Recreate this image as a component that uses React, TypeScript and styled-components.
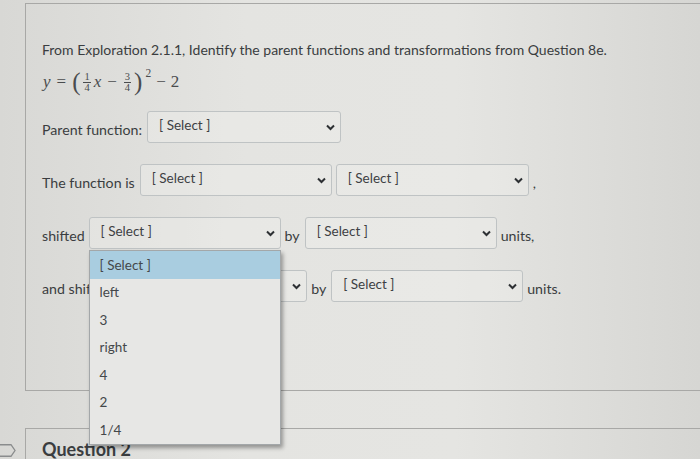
import React from 'react';
import styled, { createGlobalStyle } from 'styled-components';

const GlobalStyle = createGlobalStyle`
    html, body {
        margin: 0;
        padding: 0;
        height: 100%;
        overflow: hidden;
    }
    body {
        background: linear-gradient(90deg, #d8d8d5 0%, #e4e4e1 35%, #e5e5e2 65%, #d6d6d3 100%);
        font-family: Lato, "Open Sans", sans-serif;
        color: #3a3d40;
    }
`;

const Page = styled.div`
    display: grid;
    grid-template-columns: 25px 1fr;
    padding-top: 3px;
`;

const Card = styled.div`
    grid-column: 2;
    border-top: 1px solid #a8a8a6;
    border-left: 1px solid #a8a8a6;
    border-bottom: 1px solid #a8a8a6;
    padding: 37px 0 88px 16px;
    height: 388px;
    box-sizing: border-box;
`;

const Prompt = styled.div`
    font-size: 14px;
    line-height: 18px;
`;

const MathLine = styled.div`
    display: flex;
    align-items: center;
    height: 34px;
    margin-top: 6px;
    font-family: "Liberation Serif", "DejaVu Serif", serif;
    font-size: 17px;
    color: #4a4c4e;
`;

const Ital = styled.span`
    font-style: italic;
    margin: 0 1px;
`;

const Op = styled.span`
    margin: 0 5px;
`;

const Paren = styled.span`
    font-size: 25px;
    line-height: 1;
    transform: translateY(-1px);
    margin: 0 1px;
`;

const Frac = styled.span`
    display: inline-flex;
    flex-direction: column;
    align-items: center;
    font-size: 10.5px;
    line-height: 10px;
    margin: 0 2px;

    span:first-child {
        border-bottom: 1px solid #4a4c4e;
        padding: 0 1px;
    }
`;

const Sup = styled.span`
    font-size: 11.5px;
    align-self: flex-start;
    margin-top: 2px;
    margin-left: 2px;
`;

const Rows = styled.div`
    display: flex;
    flex-direction: column;
    gap: 21px;
    margin-top: 12px;
`;

const Row = styled.div`
    display: flex;
    align-items: center;
    height: 32px;
    font-size: 14.2px;
`;

const Label = styled.span<{ $gap?: number }>`
    margin-right: ${p => p.$gap ?? 5}px;
    transform: translateY(2px);
`;

const SelectWrap = styled.div<{ $width: number; $gap?: number }>`
    position: relative;
    width: ${p => p.$width}px;
    height: 32px;
    margin-right: ${p => p.$gap ?? 4}px;
    flex-shrink: 0;
`;

const SelectBox = styled.div`
    display: flex;
    align-items: center;
    justify-content: space-between;
    height: 100%;
    box-sizing: border-box;
    padding: 0 5px 0 11px;
    border: 1px solid #bfc3c4;
    border-radius: 3px;
    background: rgba(240, 240, 238, 0.35);
    font-size: 13.5px;
    color: #3d4043;
`;

const SelectText = styled.span`
    transform: translateY(-2px);
`;

const DropList = styled.ul`
    position: absolute;
    top: 100%;
    left: 0;
    right: 0;
    margin: 1px 0 0;
    padding: 0;
    list-style: none;
    border: 1px solid #a3a7a9;
    background: #e7e7e5;
    box-shadow: 2px 3px 4px rgba(0, 0, 0, 0.35);
    z-index: 5;
`;

const DropItem = styled.li<{ $active?: boolean }>`
    height: 27.5px;
    display: flex;
    align-items: center;
    padding-left: 10px;
    font-size: 13.5px;
    color: #44474a;
    background: ${p => (p.$active ? '#a9cde0' : 'transparent')};
`;

const Second = styled.div`
    display: contents;
`;

const FlagCell = styled.div`
    grid-column: 1;
    margin-top: 37px;
    padding-top: 13px;
`;

const QuestionBox = styled.div`
    grid-column: 2;
    margin-top: 37px;
    border-top: 1px solid #a8a8a6;
    border-left: 1px solid #a8a8a6;
    padding: 9px 0 0 16px;
    height: 40px;
`;

const QuestionTitle = styled.div`
    font-size: 18px;
    font-weight: 700;
    color: #3a3d40;
`;

const Chevron = () => (
    <svg width="9" height="7" viewBox="0 0 9 7">
        <polyline points="1,1.5 4.5,5 8,1.5" fill="none" stroke="#2d3033" strokeWidth="2" />
    </svg>
);

const Flag = () => (
    <svg width="16" height="13" viewBox="0 0 16 13">
        <path d="M-3 0.75 H11 L15 6.5 L11 12.25 H-3" fill="none" stroke="#8a8c8d" strokeWidth="1.3" />
    </svg>
);

const Select = ({ width, gap, open }: { width: number; gap?: number; open?: boolean }) => {
    const options = ['[ Select ]', 'left', '3', 'right', '4', '2', '1/4'];
    return (
        <SelectWrap $width={width} $gap={gap}>
            <SelectBox>
                <SelectText>[ Select ]</SelectText>
                <Chevron />
            </SelectBox>
            {open && (
                <DropList>
                    {options.map((o, i) => (
                        <DropItem key={o} $active={i === 0}>{o}</DropItem>
                    ))}
                </DropList>
            )}
        </SelectWrap>
    );
};

export default function App() {
    return (
        <>
            <GlobalStyle />
            <Page>
                <Card>
                    <Prompt>
                        From Exploration 2.1.1, Identify the parent functions and transformations from Question 8e.
                    </Prompt>
                    <MathLine>
                        <Ital>y</Ital>
                        <Op>=</Op>
                        <Paren>(</Paren>
                        <Frac><span>1</span><span>4</span></Frac>
                        <Ital>x</Ital>
                        <Op>−</Op>
                        <Frac><span>3</span><span>4</span></Frac>
                        <Paren>)</Paren>
                        <Sup>2</Sup>
                        <Op>−</Op>
                        <span>2</span>
                    </MathLine>
                    <Rows>
                        <Row>
                            <Label>Parent function:</Label>
                            <Select width={194} />
                        </Row>
                        <Row>
                            <Label>The function is</Label>
                            <Select width={192} />
                            <Select width={193} />
                            <Label>,</Label>
                        </Row>
                        <Row>
                            <Label $gap={4}>shifted</Label>
                            <Select width={192} open />
                            <Label>by</Label>
                            <Select width={192} />
                            <Label>units,</Label>
                        </Row>
                        <Row>
                            <Label $gap={4}>and shifted</Label>
                            <Select width={192} />
                            <Label>by</Label>
                            <Select width={192} />
                            <Label>units.</Label>
                        </Row>
                    </Rows>
                </Card>
                <Second>
                    <FlagCell>
                        <Flag />
                    </FlagCell>
                    <QuestionBox>
                        <QuestionTitle>Question 2</QuestionTitle>
                    </QuestionBox>
                </Second>
            </Page>
        </>
    );
}
